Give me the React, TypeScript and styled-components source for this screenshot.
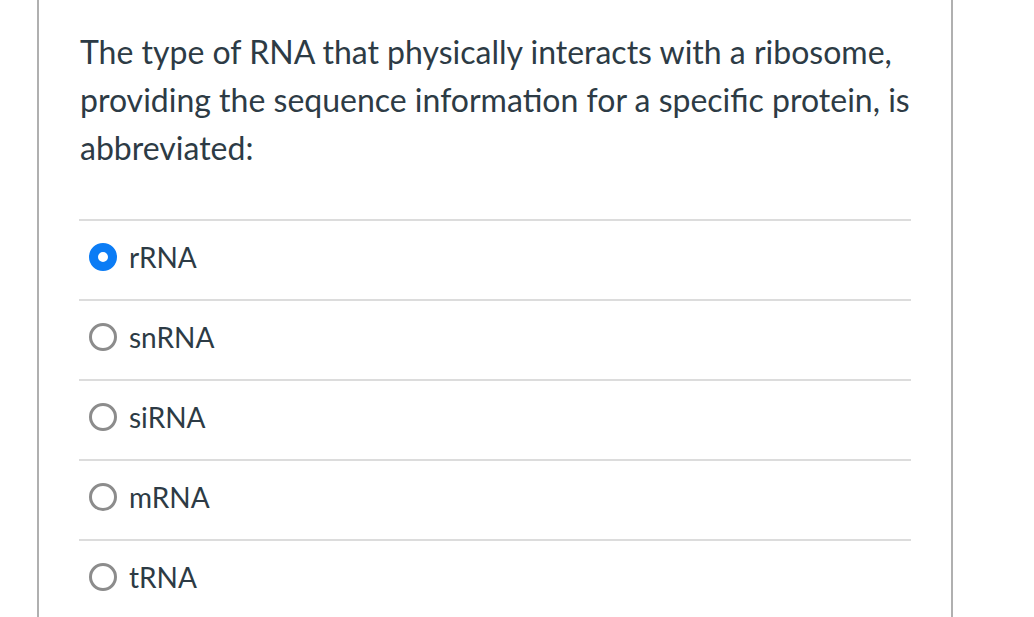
import React from "react";
import styled, { createGlobalStyle } from "styled-components";

const Global = createGlobalStyle`
  html, body { margin: 0; padding: 0; background: #fff; }
  body { font-family: Lato, "Open Sans", sans-serif; color: #2d3b45; }
`;

const Card = styled.div`
  margin-left: 37px;
  width: 916px;
  height: 617px;
  box-sizing: border-box;
  border-left: 2px solid #b0b0b0;
  border-right: 2px solid #b0b0b0;
  padding: 28px 40px 0 41px;
`;

const Question = styled.p`
  margin: 0;
  font-size: 32px;
  line-height: 48px;
  color: #2d3b45;
`;

const Options = styled.div`
  margin-top: 47px;
  margin-left: -1px;
  display: flex;
  flex-direction: column;
`;

const Row = styled.label`
  display: flex;
  align-items: center;
  height: 80px;
  box-sizing: border-box;
  border-top: 2px solid #dcdcdc;
  padding: 0 0 6px 10px;
  gap: 12px;
`;

const Radio = styled.span<{ $checked?: boolean }>`
  width: 28px;
  height: 28px;
  box-sizing: border-box;
  border-radius: 50%;
  border: ${(p) => (p.$checked ? "9px solid #0b7cf5" : "3px solid #8c8c8c")};
  background: #fff;
  flex: none;
`;

const Label = styled.span`
  font-size: 28px;
  color: #2d3b45;
`;

const options = ["rRNA", "snRNA", "siRNA", "mRNA", "tRNA"];

export default function App() {
  return (
    <>
      <Global />
      <Card>
        <Question>
          The type of RNA that physically interacts with a ribosome, providing
          the sequence information for a specific protein, is abbreviated:
        </Question>
        <Options>
          {options.map((o, i) => (
            <Row key={o}>
              <Radio $checked={i === 0} />
              <Label>{o}</Label>
            </Row>
          ))}
        </Options>
      </Card>
    </>
  );
}
